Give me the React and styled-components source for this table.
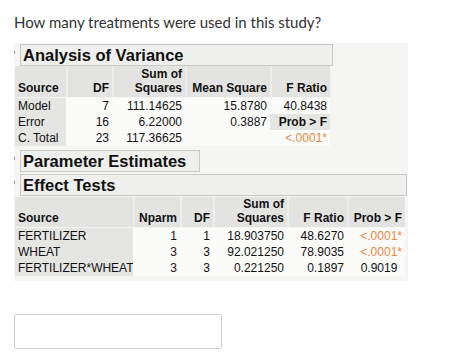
import React from 'react';
import styled, { createGlobalStyle } from 'styled-components';

const Global = createGlobalStyle`
  html, body { margin: 0; padding: 0; background: #fff; }
  body { width: 474px; height: 364px; overflow: hidden; }
`;

const Page = styled.div`
  padding: 0 14px;
  font-family: "Liberation Sans", Arial, Helvetica, sans-serif;
  color: #111;
`;

const Question = styled.p`
  margin: 0;
  padding-top: 12px;
  font-family: Lato, "Open Sans", sans-serif;
  font-size: 15px;
  line-height: 20px;
  color: #333;
`;

const Panel = styled.div`
  margin-top: 11px;
  width: 394px;
  background: #f5f5f3;
  padding: 1px 0 5px;
`;

const SectionHead = styled.div`
  display: flex;
  align-items: stretch;
  margin-top: ${p => p.$mt || 0}px;
`;

const Disclosure = styled.span`
  width: 6px;
  display: flex;
  align-items: center;
  &::before {
    content: '';
    width: 1px;
    height: 3px;
    margin-top: -6px;
    background: #9a9a9a;
  }
`;

const TitleBox = styled.div`
  width: ${p => p.$w}px;
  height: 22px;
  box-sizing: border-box;
  border: 1px solid #c9c9c7;
  background: #efefed;
  font-weight: bold;
  font-size: 16.5px;
  line-height: 20px;
  padding-left: 2px;
  color: #111;
`;

const Grid = styled.div`
  display: grid;
  grid-template-columns: ${p => p.$cols};
  margin-left: 1px;
  margin-top: ${p => p.$mt || 0}px;
`;

const HeadCell = styled.div`
  height: ${p => p.$h}px;
  box-sizing: border-box;
  background: #e3e3e1;
  border-left: ${p => (p.$first ? 'none' : '2px solid #ededeb')};
  display: flex;
  flex-direction: column;
  justify-content: flex-end;
  align-items: ${p => (p.$left ? 'flex-start' : 'flex-end')};
  text-align: ${p => (p.$left ? 'left' : 'right')};
  padding: 0 3px 2px;
  font-weight: bold;
  font-size: 12px;
  line-height: 14px;
  margin-bottom: 1px;
`;

const Cell = styled.div`
  height: 16px;
  line-height: 16px;
  font-size: 12px;
  padding: 0 3px;
  white-space: nowrap;
  text-align: ${p => (p.$left ? 'left' : 'right')};
  font-weight: ${p => (p.$bold ? 'bold' : 'normal')};
  color: ${p => (p.$sig ? '#e8893f' : '#111')};
  background: ${p => (p.$shade ? '#e5e5e3' : '#fbfbfa')};
`;

const Hidden = styled.span`
  visibility: hidden;
`;

const AnswerBox = styled.div`
  margin-top: 33px;
  width: 208px;
  height: 35px;
  box-sizing: border-box;
  border: 1px solid #cbcbcb;
  border-radius: 3px;
  background: #fff;
`;

const anovaCols = '51px 46px 73px 85px 60px';
const effectCols = '118px 47px 33px 74px 60px 58px';

const anovaRows = [
  ['Model', '7', '111.14625', '15.8780', '40.8438'],
  ['Error', '16', '6.22000', '0.3887', 'PROB'],
  ['C. Total', '23', '117.36625', '', 'SIG'],
];

const effectRows = [
  ['FERTILIZER', '1', '1', '18.903750', '48.6270', '<.0001', true],
  ['WHEAT', '3', '3', '92.021250', '78.9035', '<.0001', true],
  ['FERTILIZER*WHEAT', '3', '3', '0.221250', '0.1897', '0.9019', false],
];

function Head({ children, first, left, h }) {
  return (
    <HeadCell $first={first} $left={left} $h={h}>
      {children}
    </HeadCell>
  );
}

export default function App() {
  return (
    <>
      <Global />
      <Page>
        <Question>How many treatments were used in this study?</Question>
        <Panel>
          <SectionHead>
            <Disclosure />
            <TitleBox $w={313}>Analysis of Variance</TitleBox>
          </SectionHead>
          <Grid $cols={anovaCols}>
            <Head first left h={31}>Source</Head>
            <Head h={31}>DF</Head>
            <Head h={31}>
              <span>Sum of</span>
              <span>Squares</span>
            </Head>
            <Head h={31}>Mean Square</Head>
            <Head h={31}>F Ratio</Head>
            {anovaRows.map(r => (
              <React.Fragment key={r[0]}>
                <Cell $left $shade>{r[0]}</Cell>
                <Cell>{r[1]}</Cell>
                <Cell>{r[2]}</Cell>
                <Cell>{r[3]}</Cell>
                {r[4] === 'PROB' ? (
                  <Cell $bold $shade>Prob &gt; F</Cell>
                ) : r[4] === 'SIG' ? (
                  <Cell $sig>&lt;.0001*</Cell>
                ) : (
                  <Cell>{r[4]}</Cell>
                )}
              </React.Fragment>
            ))}
          </Grid>
          <SectionHead $mt={4}>
            <Disclosure />
            <TitleBox $w={180}>Parameter Estimates</TitleBox>
          </SectionHead>
          <SectionHead $mt={2}>
            <Disclosure />
            <TitleBox $w={387}>Effect Tests</TitleBox>
          </SectionHead>
          <Grid $cols={effectCols} $mt={1}>
            <Head first left h={30}>Source</Head>
            <Head h={30}>Nparm</Head>
            <Head h={30}>DF</Head>
            <Head h={30}>
              <span>Sum of</span>
              <span>Squares</span>
            </Head>
            <Head h={30}>F Ratio</Head>
            <Head h={30}>Prob &gt; F</Head>
            {effectRows.map(r => (
              <React.Fragment key={r[0]}>
                <Cell $left $shade>{r[0]}</Cell>
                <Cell>{r[1]}</Cell>
                <Cell>{r[2]}</Cell>
                <Cell>{r[3]}</Cell>
                <Cell>{r[4]}</Cell>
                <Cell $sig={r[6]}>
                  {r[5]}
                  {r[6] ? '*' : <Hidden>*</Hidden>}
                </Cell>
              </React.Fragment>
            ))}
          </Grid>
        </Panel>
        <AnswerBox />
      </Page>
    </>
  );
}
